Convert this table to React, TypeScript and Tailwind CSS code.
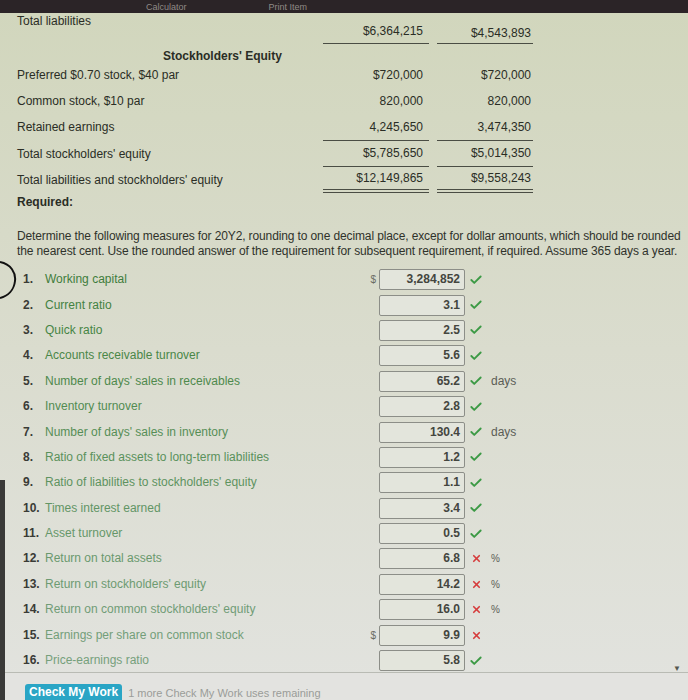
import { Check, X } from "lucide-react"

const font = { fontFamily: '"Liberation Sans", Arial, sans-serif' }

type Row = {
  label: string
  a: string
  b: string
  h: string
  line?: "single" | "double"
}

const equityRows: Row[] = [
  { label: "Preferred $0.70 stock, $40 par", a: "$720,000", b: "$720,000", h: "h-[27px]" },
  { label: "Common stock, $10 par", a: "820,000", b: "820,000", h: "h-[25px]" },
  { label: "Retained earnings", a: "4,245,650", b: "3,474,350", h: "h-[27px]", line: "single" },
  { label: "Total stockholders' equity", a: "$5,785,650", b: "$5,014,350", h: "h-[26px]", line: "single" },
  { label: "Total liabilities and stockholders' equity", a: "$12,149,865", b: "$9,558,243", h: "h-[26px]", line: "double" },
]

type Item = {
  n: number
  label: string
  value: string
  ok: boolean
  unit?: string
  dollar?: boolean
  color: string
}

const items: Item[] = [
  { n: 1, label: "Working capital", value: "3,284,852", ok: true, dollar: true, color: "text-[#3f7d3c]" },
  { n: 2, label: "Current ratio", value: "3.1", ok: true, color: "text-[#438242]" },
  { n: 3, label: "Quick ratio", value: "2.5", ok: true, color: "text-[#468544]" },
  { n: 4, label: "Accounts receivable turnover", value: "5.6", ok: true, color: "text-[#4a8748]" },
  { n: 5, label: "Number of days' sales in receivables", value: "65.2", ok: true, unit: "days", color: "text-[#4e894c]" },
  { n: 6, label: "Inventory turnover", value: "2.8", ok: true, color: "text-[#528c52]" },
  { n: 7, label: "Number of days' sales in inventory", value: "130.4", ok: true, unit: "days", color: "text-[#568e56]" },
  { n: 8, label: "Ratio of fixed assets to long-term liabilities", value: "1.2", ok: true, color: "text-[#5a915b]" },
  { n: 9, label: "Ratio of liabilities to stockholders' equity", value: "1.1", ok: true, color: "text-[#5e9360]" },
  { n: 10, label: "Times interest earned", value: "3.4", ok: true, color: "text-[#629565]" },
  { n: 11, label: "Asset turnover", value: "0.5", ok: true, color: "text-[#669769]" },
  { n: 12, label: "Return on total assets", value: "6.8", ok: false, unit: "%", color: "text-[#6a996e]" },
  { n: 13, label: "Return on stockholders' equity", value: "14.2", ok: false, unit: "%", color: "text-[#6d9b72]" },
  { n: 14, label: "Return on common stockholders' equity", value: "16.0", ok: false, unit: "%", color: "text-[#709c76]" },
  { n: 15, label: "Earnings per share on common stock", value: "9.9", ok: false, dollar: true, color: "text-[#739e79]" },
  { n: 16, label: "Price-earnings ratio", value: "5.8", ok: true, color: "text-[#76a07c]" },
]

function lineClass(line?: "single" | "double") {
  if (line === "single") return "border-b border-[#4a4d44]"
  if (line === "double") return "border-b-[4px] border-double border-[#4a4d44]"
  return ""
}

function EquityRow({ row }: { row: Row }) {
  return (
    <div className={`flex items-center ${row.h}`}>
      <div className="w-[306px]">{row.label}</div>
      <div className={`w-[106px] h-full flex items-center justify-end pr-[6px] ${lineClass(row.line)}`}>{row.a}</div>
      <div className="w-[8px]" />
      <div className={`w-[96px] h-full flex items-center justify-end pr-[2px] ${lineClass(row.line)}`}>{row.b}</div>
    </div>
  )
}

function ItemRow({ item }: { item: Item }) {
  return (
    <div className="flex items-center h-[25.4px]">
      <div className="w-[28px] pl-[6px] font-bold text-[#3a3b36]">{item.n}.</div>
      <div className={`w-[320px] ${item.color}`}>{item.label}</div>
      <div className="w-[14px] text-[10px] text-[#6a6d64] text-right pr-[3px]">{item.dollar ? "$" : ""}</div>
      <div className="w-[86px] h-[21px] border border-[#8c8e88] rounded-[2px] bg-[#e3e5dc] flex items-center justify-end pr-[4px] font-bold text-[#44463f]">
        {item.value}
      </div>
      <div className="w-[22px] flex justify-center">
        {item.ok ? (
          <Check size={14} strokeWidth={3.2} className="text-[#3c9a45]" />
        ) : (
          <X size={11} strokeWidth={3.6} className="text-[#d63c3c]" />
        )}
      </div>
      {item.unit && (
        <div className={`pl-[4px] text-[#5a5c55] ${item.unit === "%" ? "text-[10px]" : ""}`}>{item.unit}</div>
      )}
    </div>
  )
}

export default function App() {
  return (
    <div
      style={font}
      className="relative w-[688px] h-[700px] overflow-hidden text-[12px] leading-[15px] text-[#2a2d25] bg-linear-to-b from-[#d1d6bc] via-[#dadcce] to-[#e2e3df]"
    >
      <div className="h-[13px] bg-[#2b2427] flex items-center text-[#8f8a86] text-[9px] leading-[10px]">
        <span className="ml-[146px]">Calculator</span>
        <span className="ml-[82px]">Print Item</span>
      </div>

      <div className="pl-[17px]">
        <div className="flex items-center h-[31px]">
          <div className="w-[306px] self-start pt-[1px]">Total liabilities</div>
          <div className="w-[106px] h-full flex items-center justify-end pr-[6px] pt-[6px] border-b border-[#4a4d44]">$6,364,215</div>
          <div className="w-[8px]" />
          <div className="w-[96px] h-full flex items-center justify-end pr-[2px] pt-[10px] border-b border-[#4a4d44]">$4,543,893</div>
        </div>

        <div className="h-[18px] flex items-center pl-[146px] font-bold pt-[6px]">Stockholders' Equity</div>

        <div>
          {equityRows.map((r) => (
            <EquityRow key={r.label} row={r} />
          ))}
        </div>

        <div className="h-[16px] flex items-center font-bold mt-[1px]">Required:</div>

        <div className="mt-[19px] text-[#2f322b] whitespace-nowrap tracking-[-0.12px]">
          <div>Determine the following measures for 20Y2, rounding to one decimal place, except for dollar amounts, which should be rounded</div>
          <div>the nearest cent. Use the rounded answer of the requirement for subsequent requirement, if required. Assume 365 days a year.</div>
        </div>

        <div className="mt-[8px]">
          {items.map((it) => (
            <ItemRow key={it.n} item={it} />
          ))}
        </div>
      </div>

      <div className="absolute left-0 top-[258px] w-[20px] h-[44px]">
        <svg width="20" height="44" viewBox="0 0 20 44">
          <path d="M0 4 C 11 6, 16 15, 15 23 C 14 32, 8 38, 0 40" fill="none" stroke="#111" strokeWidth="2" />
        </svg>
      </div>

      <div className="absolute left-0 bottom-0 h-[28px] w-full border-t border-[#b9bbb4] bg-[#e3e3e0] flex items-end pl-[25px]">
        <div className="h-[16px] px-[4px] rounded-t-[3px] bg-[#2aa5c5] text-white font-bold text-[12px] leading-[16px]">Check My Work</div>
        <div className="ml-[6px] text-[#9a9c98] text-[11px] leading-[14px]">1 more Check My Work uses remaining</div>
      </div>
      <div className="absolute right-[7px] bottom-[24px] text-[8px] text-[#55574f]">▼</div>
      <div className="absolute left-0 top-[480px] bottom-0 w-[5px] bg-[#3a3a38]" />
    </div>
  )
}
